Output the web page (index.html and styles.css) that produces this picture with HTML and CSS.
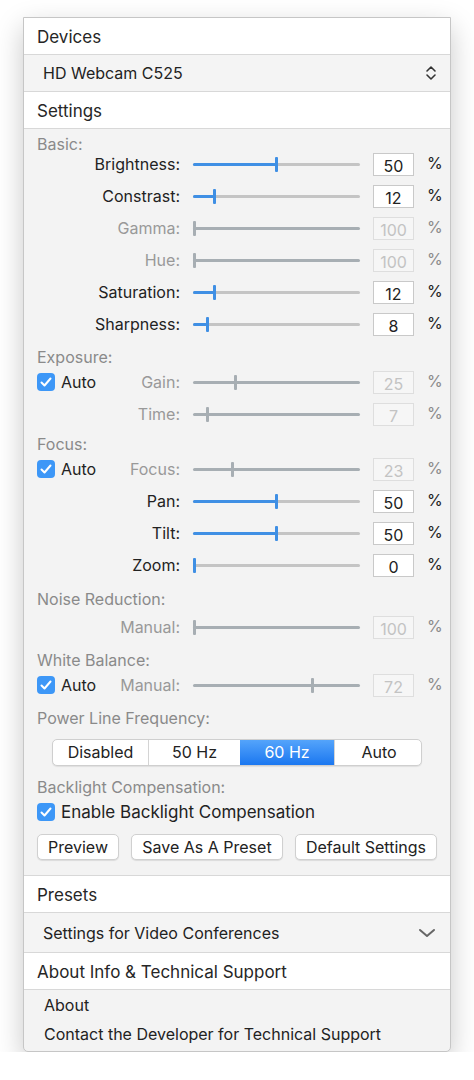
FILE: index.html
```html
<!DOCTYPE html>
<html lang="en">
<head>
  <meta charset="UTF-8">
  <meta name="viewport" content="width=device-width, initial-scale=1.0">
  <title>Webcam Settings</title>
  <link rel="stylesheet" href="styles.css">
</head>
<body>
  <div class="window">
    <div class="header">Devices</div>
    <div class="select-row">
      <span>HD Webcam C525</span>
      <svg class="updown" width="12" height="18" viewBox="0 0 12 18">
        <path d="M2 7 L6 3 L10 7 M2 11 L6 15 L10 11" fill="none" stroke="#333" stroke-width="1.6" stroke-linecap="round" stroke-linejoin="round"/>
      </svg>
    </div>

    <div class="header">Settings</div>
    <div class="settings">
      <div class="group basic">
        <div class="group-label">Basic:</div>
        <div class="row">
          <span class="label">Brightness:</span>
          <div class="slider" style="--v:50"><div class="fill"></div><div class="knob"></div></div>
          <span class="value">50</span><span class="pct">%</span>
        </div>
        <div class="row">
          <span class="label">Constrast:</span>
          <div class="slider" style="--v:12"><div class="fill"></div><div class="knob"></div></div>
          <span class="value">12</span><span class="pct">%</span>
        </div>
        <div class="row disabled">
          <span class="label">Gamma:</span>
          <div class="slider" style="--v:0"><div class="knob"></div></div>
          <span class="value">100</span><span class="pct">%</span>
        </div>
        <div class="row disabled">
          <span class="label">Hue:</span>
          <div class="slider" style="--v:0"><div class="knob"></div></div>
          <span class="value">100</span><span class="pct">%</span>
        </div>
        <div class="row">
          <span class="label">Saturation:</span>
          <div class="slider" style="--v:12"><div class="fill"></div><div class="knob"></div></div>
          <span class="value">12</span><span class="pct">%</span>
        </div>
        <div class="row">
          <span class="label">Sharpness:</span>
          <div class="slider" style="--v:8"><div class="fill"></div><div class="knob"></div></div>
          <span class="value">8</span><span class="pct">%</span>
        </div>
      </div>

      <div class="group">
        <div class="group-label">Exposure:</div>
        <div class="row disabled">
          <span class="label split">
            <span class="check"><span class="box"><svg width="18" height="18" viewBox="0 0 18 18"><path d="M4.5 9.5 L7.5 12.5 L13.5 5.5" fill="none" stroke="#fff" stroke-width="2" stroke-linecap="round" stroke-linejoin="round"/></svg></span>Auto</span>
            <span>Gain:</span>
          </span>
          <div class="slider" style="--v:25"><div class="knob"></div></div>
          <span class="value">25</span><span class="pct">%</span>
        </div>
        <div class="row disabled">
          <span class="label">Time:</span>
          <div class="slider" style="--v:8"><div class="knob"></div></div>
          <span class="value">7</span><span class="pct">%</span>
        </div>
      </div>

      <div class="group focus">
        <div class="group-label">Focus:</div>
        <div class="row disabled">
          <span class="label split">
            <span class="check"><span class="box"><svg width="18" height="18" viewBox="0 0 18 18"><path d="M4.5 9.5 L7.5 12.5 L13.5 5.5" fill="none" stroke="#fff" stroke-width="2" stroke-linecap="round" stroke-linejoin="round"/></svg></span>Auto</span>
            <span>Focus:</span>
          </span>
          <div class="slider" style="--v:23"><div class="knob"></div></div>
          <span class="value">23</span><span class="pct">%</span>
        </div>
        <div class="row">
          <span class="label">Pan:</span>
          <div class="slider" style="--v:50"><div class="fill"></div><div class="knob"></div></div>
          <span class="value">50</span><span class="pct">%</span>
        </div>
        <div class="row">
          <span class="label">Tilt:</span>
          <div class="slider" style="--v:50"><div class="fill"></div><div class="knob"></div></div>
          <span class="value">50</span><span class="pct">%</span>
        </div>
        <div class="row">
          <span class="label">Zoom:</span>
          <div class="slider" style="--v:0"><div class="fill"></div><div class="knob"></div></div>
          <span class="value">0</span><span class="pct">%</span>
        </div>
      </div>

      <div class="group noise">
        <div class="group-label">Noise Reduction:</div>
        <div class="row disabled">
          <span class="label">Manual:</span>
          <div class="slider" style="--v:0"><div class="knob"></div></div>
          <span class="value">100</span><span class="pct">%</span>
        </div>
      </div>

      <div class="group">
        <div class="group-label">White Balance:</div>
        <div class="row disabled">
          <span class="label split">
            <span class="check"><span class="box"><svg width="18" height="18" viewBox="0 0 18 18"><path d="M4.5 9.5 L7.5 12.5 L13.5 5.5" fill="none" stroke="#fff" stroke-width="2" stroke-linecap="round" stroke-linejoin="round"/></svg></span>Auto</span>
            <span>Manual:</span>
          </span>
          <div class="slider" style="--v:72"><div class="knob"></div></div>
          <span class="value">72</span><span class="pct">%</span>
        </div>
      </div>

      <div class="group">
        <div class="group-label">Power Line Frequency:</div>
        <div class="segmented">
          <span>Disabled</span>
          <span>50 Hz</span>
          <span class="selected">60 Hz</span>
          <span>Auto</span>
        </div>
      </div>

      <div class="group backlight">
        <div class="group-label">Backlight Compensation:</div>
        <div class="check-row">
          <span class="check"><span class="box"><svg width="18" height="18" viewBox="0 0 18 18"><path d="M4.5 9.5 L7.5 12.5 L13.5 5.5" fill="none" stroke="#fff" stroke-width="2" stroke-linecap="round" stroke-linejoin="round"/></svg></span>Enable Backlight Compensation</span>
        </div>
      </div>

      <div class="buttons">
        <button class="btn">Preview</button>
        <button class="btn">Save As A Preset</button>
        <button class="btn">Default Settings</button>
      </div>
    </div>

    <div class="header">Presets</div>
    <div class="select-row presets">
      <span>Settings for Video Conferences</span>
      <svg class="chevron" width="18" height="10" viewBox="0 0 18 10">
        <path d="M2 2 L9 8 L16 2" fill="none" stroke="#666" stroke-width="2" stroke-linecap="round" stroke-linejoin="round"/>
      </svg>
    </div>

    <div class="header">About Info &amp; Technical Support</div>
    <div class="links">
      <div>About</div>
      <div>Contact the Developer for Technical Support</div>
    </div>
  </div>
</body>
</html>
```

FILE: styles.css
```css
* {
  margin: 0;
  padding: 0;
  box-sizing: border-box;
}

body {
  font-family: Inter, "Liberation Sans", sans-serif;
  font-size: 16px;
  color: #222;
  background: #fff;
}

.window {
  width: 428px;
  margin: 17px 0 0 23px;
  background: #f3f3f3;
  border: 1px solid #c6c6c6;
  border-radius: 0 0 5px 5px;
  box-shadow: 0 10px 28px rgba(0, 0, 0, 0.22);
}

.header {
  height: 37px;
  line-height: 38px;
  padding-left: 13px;
  font-size: 17px;
  color: #262626;
  background: #fff;
  border-bottom: 1px solid #d8d8d8;
}

.select-row {
  height: 37px;
  display: flex;
  justify-content: space-between;
  align-items: center;
  padding: 0 13px 0 19px;
  background: #f4f4f4;
  border-bottom: 1px solid #d8d8d8;
}

.presets {
  height: 40px;
  padding-right: 14px;
}

.settings {
  padding: 4px 13px 15px;
  border-bottom: 1px solid #d8d8d8;
}

.group + .group {
  margin-top: 9px;
}

.group.focus {
  margin-top: 6px;
}

.group.noise {
  margin-top: 10px;
}

.group.backlight {
  margin-top: 10px;
}

.group-label {
  height: 22px;
  line-height: 22px;
  color: #8a8a8a;
}

.row {
  display: grid;
  grid-template-columns: 143px 167px 41px 1fr;
  column-gap: 13px;
  align-items: center;
  height: 26px;
}

.group-label + .row {
  margin-top: 1px;
}

.basic .group-label + .row {
  margin-top: -4px;
}

.noise .group-label + .row {
  margin-top: 4px;
}

.row + .row {
  margin-top: 6px;
}

.label {
  text-align: right;
}

.label.split {
  display: flex;
  justify-content: space-between;
  align-items: center;
}

.label.split span:last-child {
  color: #999;
}

.check {
  display: flex;
  align-items: center;
  gap: 6px;
  color: #222;
}

.box {
  width: 18px;
  height: 18px;
  border-radius: 4px;
  background: #3d97f7;
  display: flex;
}

.slider {
  position: relative;
  height: 3px;
  background: #c4c4c4;
  border-radius: 2px;
}

.fill {
  height: 3px;
  width: calc((100% - 3px) * var(--v) / 100 + 1px);
  background: #3f8fe4;
  border-radius: 2px;
}

.knob {
  position: absolute;
  top: -6px;
  left: calc((100% - 3px) * var(--v) / 100);
  width: 3px;
  height: 15px;
  border-radius: 1px;
  background: #3f8fe4;
}

.value {
  height: 23px;
  line-height: 23px;
  padding-top: 1px;
  text-align: center;
  background: #fff;
  border: 1px solid #c9c9c9;
}

.pct {
  padding-bottom: 2px;
}

.row.disabled .label {
  color: #999;
}

.row.disabled .slider,
.row.disabled .knob {
  background: #a7aeb3;
}

.row.disabled .value {
  color: #c3c3c3;
  border-color: #dedede;
  background: #f6f6f6;
}

.row.disabled .pct {
  color: #8a8a8a;
}

.segmented {
  display: grid;
  grid-template-columns: 95px 92px 94px 89px;
  width: 370px;
  height: 27px;
  margin: 10px auto 0;
  background: #fff;
  border: 1px solid #cfcfcf;
  border-radius: 5px;
  box-shadow: 0 1px 1px rgba(0, 0, 0, 0.08);
  overflow: hidden;
}

.segmented span {
  text-align: center;
  line-height: 25px;
  border-left: 1px solid #d4d4d4;
}

.segmented span:first-child {
  border-left: none;
}

.segmented .selected {
  color: #fff;
  background: linear-gradient(#54a4fb, #1b77f0);
  border-left: none;
}

.check-row {
  height: 26px;
  margin-top: 1px;
  display: flex;
  align-items: center;
  font-size: 17px;
}

.buttons {
  display: flex;
  justify-content: space-between;
  margin-top: 9px;
}

.btn {
  height: 26px;
  padding: 0 10px;
  font-family: inherit;
  font-size: 16px;
  color: #222;
  background: #fff;
  border: 1px solid #d0d0d0;
  border-radius: 5px;
  box-shadow: 0 1px 1px rgba(0, 0, 0, 0.1);
}

.links {
  padding: 1px 20px 2px;
}

.links div {
  height: 29px;
  line-height: 29px;
}
```
